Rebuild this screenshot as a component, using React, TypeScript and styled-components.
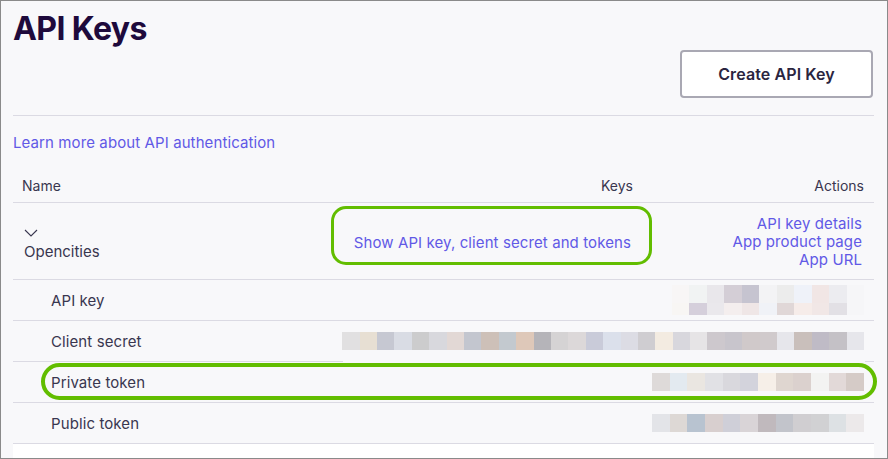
import React from 'react';
import styled, { createGlobalStyle } from 'styled-components';

const GlobalStyle = createGlobalStyle`
  html, body {
    margin: 0;
    padding: 0;
  }
  body {
    font-family: Inter, 'Liberation Sans', sans-serif;
    background: #f8f8fa;
  }
`;

const LINE = '#dbdae3';
const INK = '#39364f';
const LINK = '#6159e6';
const MARK = '#62bd00';

const Frame = styled.div`
  width: 888px;
  height: 459px;
  box-sizing: border-box;
  border: 1px solid #8a8a8a;
  background: #f8f8fa;
  padding: 8px 13px 0 12px;
  display: flex;
  flex-direction: column;
  overflow: hidden;
`;

const Title = styled.h1`
  margin: 0;
  font-size: 32px;
  line-height: 40px;
  font-weight: 700;
  letter-spacing: -0.6px;
  color: #1e0a3c;
`;

const Toolbar = styled.div`
  display: flex;
  justify-content: flex-end;
  padding: 1px 1px 17px 0;
  border-bottom: 1px solid ${LINE};
`;

const OutlineButton = styled.button`
  width: 193px;
  height: 48px;
  box-sizing: border-box;
  border: 2px solid #a9a8b3;
  border-radius: 4px;
  background: #fff;
  font-family: inherit;
  font-size: 16px;
  font-weight: 600;
  letter-spacing: 0.1px;
  color: #2a2540;
  cursor: pointer;
`;

const Link = styled.a`
  color: ${LINK};
  font-size: 15px;
  line-height: 18px;
  letter-spacing: 0.1px;
  text-decoration: none;
  cursor: pointer;
`;

const LearnMore = styled(Link)`
  display: block;
  margin-top: 17px;
  line-height: 20px;
`;

const Row = styled.div<{ $height: number; $split?: boolean }>`
  position: relative;
  display: grid;
  grid-template-columns: 330px 1fr 231px;
  align-items: center;
  height: ${(p) => p.$height}px;
  ${(p) =>
    p.$split
      ? `background: linear-gradient(to right, ${LINE} 0 330px, transparent 330px calc(100% - 9px), ${LINE} calc(100% - 9px)) left bottom / 100% 1px no-repeat;
         padding-bottom: 1px;`
      : `border-bottom: 1px solid ${LINE};`}
`;

const HeadRow = styled(Row)`
  align-items: end;
  padding-bottom: 7px;
`;

const HeadCell = styled.div<{ $align?: 'left' | 'right' }>`
  font-size: 14px;
  line-height: 18px;
  color: ${INK};
  text-align: ${(p) => p.$align || 'left'};
  padding: ${(p) => (p.$align === 'right' ? '0 10px 0 0' : '0 0 0 9px')};
`;

const AppName = styled.div`
  display: flex;
  flex-direction: column;
  align-items: flex-start;
  padding: 3px 0 0 11px;
  font-size: 15px;
  line-height: 18px;
  color: ${INK};
`;

const Chevron = styled.svg`
  width: 14px;
  height: 18px;
  display: block;
`;

const KeysCell = styled.div`
  text-align: right;
  padding: 2px 12px 0 0;
`;

const Marked = styled.span`
  position: relative;
  display: inline-block;
  &::after {
    content: '';
    position: absolute;
    inset: -26px -21px -13px -23px;
    border: 3px solid ${MARK};
    border-radius: 15px;
    pointer-events: none;
  }
`;

const ActionList = styled.div`
  display: flex;
  flex-direction: column;
  align-items: flex-end;
  padding: 2px 12px 0 0;
`;

const Label = styled.div`
  padding: 2px 0 0 38px;
  font-size: 15px;
  line-height: 18px;
  letter-spacing: 0.1px;
  color: ${INK};
`;

const SecretCell = styled.div`
  grid-column: 2 / 4;
  display: flex;
  justify-content: flex-end;
  padding-right: 10px;
`;

const Pixels = styled.div`
  display: flex;
  flex-direction: column;
`;

const PixelRow = styled.div<{ $h: number }>`
  display: flex;
  height: ${(p) => p.$h}px;
`;

const Pixel = styled.span<{ $w: number }>`
  display: block;
  width: ${(p) => p.$w}px;
  height: 100%;
`;

const RowMark = styled.div`
  position: absolute;
  top: 1px;
  bottom: 2px;
  left: 28px;
  right: -3px;
  border: 4px solid ${MARK};
  border-radius: 20px;
  pointer-events: none;
`;

const Rest = styled.div`
  flex: 1;
  background: #fff;
`;

type Secret = { label: string; rows: { h: number; colors: string[] }[]; width: number; marked?: boolean; split?: boolean };

const secrets: Secret[] = [
  {
    label: 'API key',
    width: 192,
    rows: [
      {
        h: 18,
        colors: ['#f8f6f6', '#f1f3f3', '#e9e7eb', '#d4ced6', '#c6c4d0', '#f3f3f5', '#ececec', '#eff2f9', '#f1e6e5', '#ececf0', '#f6f6f8'],
      },
      {
        h: 12,
        colors: ['#f8f6f4', '#d5cfdb', '#eae8ec', '#f4eeee', '#efe6e6', '#f0f2f7', '#e0d7d7', '#f6ece9', '#f1e7e6', '#e2e0e5', '#f6f6f8'],
      },
    ],
  },
  {
    label: 'Client secret',
    width: 522,
    split: true,
    rows: [
      {
        h: 18,
        colors: [
          '#e1e0e1', '#e7dfd3', '#c6c8d2', '#d9dce4', '#cccccd', '#d8d8dd', '#e2d8d5', '#c3c6cf', '#cdc0b8', '#c3c9cf',
          '#dec8b9', '#b5b4b9', '#d5d3d4', '#dcd8d9', '#c9cbd9', '#dbe0eb', '#dcdce4', '#cfcdd1', '#f3ebe1', '#d8d7dd',
          '#e6e4e6', '#cdc8cd', '#c8c5cc', '#d0c9ca', '#d0cacc', '#e6e6eb', '#c9bfbb', '#bfbbc6', '#c4c1c6', '#e6e6eb',
        ],
      },
    ],
  },
  {
    label: 'Private token',
    width: 212,
    marked: true,
    rows: [
      {
        h: 18,
        colors: ['#dedad9', '#e3eaf0', '#eae6e1', '#e1e1e5', '#d9d8dd', '#d3d3dc', '#f6efe8', '#dfd6d0', '#dbd1ce', '#f3f3f2', '#e2d9d8', '#d5cbc7'],
      },
    ],
  },
  {
    label: 'Public token',
    width: 212,
    rows: [
      {
        h: 18,
        colors: ['#e3e4e8', '#ddd8d5', '#b8c3d0', '#d8cfcf', '#cfcfd8', '#d9d4d7', '#c0b9bd', '#c2c4cb', '#d0ced1', '#d1d1d3', '#dde1e4', '#ece9ea'],
      },
    ],
  },
];

const App: React.FC = () => {
  return (
    <>
      <GlobalStyle />
      <Frame>
        <Title>API Keys</Title>
        <Toolbar>
          <OutlineButton>Create API Key</OutlineButton>
        </Toolbar>
        <LearnMore>Learn more about API authentication</LearnMore>

        <HeadRow $height={42}>
          <HeadCell>Name</HeadCell>
          <HeadCell $align="right">Keys</HeadCell>
          <HeadCell $align="right">Actions</HeadCell>
        </HeadRow>

        <Row $height={76}>
          <AppName>
            <Chevron viewBox="0 0 14 18">
              <polyline points="1,5 7,11 13,5" fill="none" stroke="#39364f" strokeWidth="1.1" />
            </Chevron>
            Opencities
          </AppName>
          <KeysCell>
            <Marked>
              <Link>Show API key, client secret and tokens</Link>
            </Marked>
          </KeysCell>
          <ActionList>
            <Link>API key details</Link>
            <Link>App product page</Link>
            <Link>App URL</Link>
          </ActionList>
        </Row>

        {secrets.map((s) => (
          <Row key={s.label} $height={40} $split={s.split}>
            <Label>{s.label}</Label>
            <SecretCell>
              <Pixels>
                {s.rows.map((r, i) => (
                  <PixelRow key={i} $h={r.h}>
                    {r.colors.map((c, j) => (
                      <Pixel key={j} $w={s.width / r.colors.length} style={{ background: c }} />
                    ))}
                  </PixelRow>
                ))}
              </Pixels>
            </SecretCell>
            {s.marked && <RowMark />}
          </Row>
        ))}
        <Rest />
      </Frame>
    </>
  );
};

export default App;
